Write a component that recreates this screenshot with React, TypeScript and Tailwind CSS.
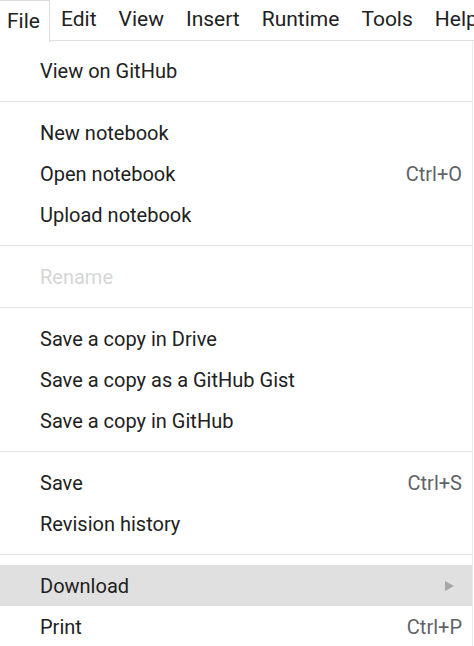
import React from "react";

type Entry =
  | { kind: "item"; label: string; shortcut?: string; disabled?: boolean; active?: boolean; submenu?: boolean }
  | { kind: "divider" };

const tabs = ["Edit", "View", "Insert", "Runtime", "Tools", "Help"];

const entries: Entry[] = [
  { kind: "item", label: "View on GitHub" },
  { kind: "divider" },
  { kind: "item", label: "New notebook" },
  { kind: "item", label: "Open notebook", shortcut: "Ctrl+O" },
  { kind: "item", label: "Upload notebook" },
  { kind: "divider" },
  { kind: "item", label: "Rename", disabled: true },
  { kind: "divider" },
  { kind: "item", label: "Save a copy in Drive" },
  { kind: "item", label: "Save a copy as a GitHub Gist" },
  { kind: "item", label: "Save a copy in GitHub" },
  { kind: "divider" },
  { kind: "item", label: "Save", shortcut: "Ctrl+S" },
  { kind: "item", label: "Revision history" },
  { kind: "divider" },
  { kind: "item", label: "Download", active: true, submenu: true },
  { kind: "item", label: "Print", shortcut: "Ctrl+P" },
];

const App: React.FC = () => {
  return (
    <div
      className="w-[474px] h-[646px] overflow-hidden bg-white text-[20px] text-[#212121]"
      style={{ fontFamily: "Roboto, 'Liberation Sans', sans-serif" }}
    >
      {/* Menu bar */}
      <div className="flex h-[41px] border-b border-[#e0e0e0] whitespace-nowrap text-[21px]">
        <div className="relative z-10 -mb-px flex h-[42px] items-center border-t border-r border-[#dcdcdc] bg-white pl-[7px] pr-[9px]">
          File
        </div>
        {tabs.map((t) => (
          <div key={t} className="flex items-center px-[11px]">
            {t}
          </div>
        ))}
      </div>

      {/* File menu */}
      <div className="w-[473px] border-r border-[#ececec] pt-[9px]">
        {entries.map((e, i) =>
          e.kind === "divider" ? (
            <div key={i} className="py-[10px]">
              <div className="h-px bg-[#e3e3e3]" />
            </div>
          ) : (
            <div
              key={i}
              className={`flex h-[41px] items-center justify-between pl-[40px] pr-[10px] ${
                e.active ? "bg-[#e0e0e0]" : ""
              } ${e.disabled ? "text-[#d6d6d6]" : ""}`}
            >
              <span>{e.label}</span>
              {e.shortcut && <span className="text-[#5f6368]">{e.shortcut}</span>}
              {e.submenu && (
                <svg width="9" height="10" viewBox="0 0 9 10" className="mr-[8px]">
                  <path d="M0 0 L9 5 L0 10 Z" fill="#a8a8a8" />
                </svg>
              )}
            </div>
          )
        )}
      </div>
    </div>
  );
};

export default App;
